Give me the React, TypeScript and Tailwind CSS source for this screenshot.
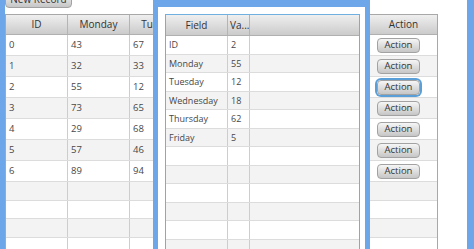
import React from 'react';

const FONT = "font-['Open_Sans','Liberation_Sans',sans-serif]";

// back table columns (px, includes right border line)
const BACK_COLS = [
  { key: 'id', label: 'ID', w: 'w-[62px]' },
  { key: 'mon', label: 'Monday', w: 'w-[62px]' },
  { key: 'tue', label: 'Tuesday', w: 'w-[62px]' },
  { key: 'wed', label: 'Wednesday', w: 'w-[62px]' },
  { key: 'thu', label: 'Thursday', w: 'w-[62px]' },
  { key: 'fri', label: 'Friday', w: 'w-[54px]' },
];

const RECORDS = [
  [0, 43, 67, 21, 35, 12],
  [1, 32, 33, 48, 77, 20],
  [2, 55, 12, 18, 62, 5],
  [3, 73, 65, 40, 19, 88],
  [4, 29, 68, 11, 53, 70],
  [5, 57, 46, 92, 8, 31],
  [6, 89, 94, 27, 60, 44],
];

const DETAIL = [
  ['ID', '2'],
  ['Monday', '55'],
  ['Tuesday', '12'],
  ['Wednesday', '18'],
  ['Thursday', '62'],
  ['Friday', '5'],
];

const headerCls =
  'flex items-center justify-center overflow-hidden whitespace-nowrap border-r border-[#b4b4b4] bg-linear-to-b from-[#efefef] to-[#cbcbcb] text-[10px] text-[#333] h-full';

const cellCls = 'flex items-center overflow-hidden whitespace-nowrap border-r border-[#cdcdcd] pl-[3px]';

const ActionButton: React.FC<{ focused?: boolean }> = ({ focused }) => (
  <div
    className={
      'flex h-[15px] w-[43px] items-center justify-center rounded-[4px] border border-[#a2a2a2] bg-linear-to-b from-[#f6f6f6] to-[#c6c6c6] text-[9.5px] text-[#333] ' +
      (focused ? 'ring-2 ring-[#5b9fd8]' : '')
    }
  >
    Action
  </div>
);

export default function App() {
  const emptyBack = Array.from({ length: 5 });
  const emptyDetail = Array.from({ length: 8 });

  return (
    <div className={`relative flex h-[249px] w-[474px] overflow-hidden bg-[#6ea6ea] ${FONT}`}>
      {/* main window */}
      <div className="ml-[5px] mr-[7px] flex flex-1 flex-col bg-white">
        <div className="-mt-[9px] flex h-[17px] w-[67px] items-center justify-center rounded-[4px] border border-[#a2a2a2] bg-linear-to-b from-[#f6f6f6] to-[#c6c6c6] text-[10px] text-[#333]">
          New Record
        </div>

        <div className="mt-[6px] flex w-[433px] flex-col border-l border-r border-t border-[#a8a8a8]">
          {/* header */}
          <div className="flex h-[20px] border-b border-[#b0b0b0]">
            {BACK_COLS.map((c) => (
              <div key={c.key} className={`${headerCls} ${c.w}`}>
                {c.label}
              </div>
            ))}
            <div className={`${headerCls} w-[67px] border-r-0`}>Action</div>
          </div>

          {/* data rows */}
          {RECORDS.map((r, i) => (
            <div
              key={i}
              className={`flex h-[21px] border-b border-[#dcdcdc] text-[9.5px] text-[#474747] ${
                i % 2 ? 'bg-[#f3f3f3]' : 'bg-white'
              }`}
            >
              {BACK_COLS.map((c, j) => (
                <div key={c.key} className={`${cellCls} ${c.w}`}>
                  {r[j]}
                </div>
              ))}
              <div className="flex w-[67px] items-center pl-[7px]">
                <ActionButton focused={i === 2} />
              </div>
            </div>
          ))}

          {/* empty rows */}
          {emptyBack.map((_, i) => (
            <div
              key={i}
              className={`flex h-[18.5px] border-b border-[#dcdcdc] ${(i + 7) % 2 ? 'bg-[#f3f3f3]' : 'bg-white'}`}
            >
              {BACK_COLS.map((c) => (
                <div key={c.key} className={`border-r border-[#cdcdcd] ${c.w}`} />
              ))}
              <div className="w-[67px]" />
            </div>
          ))}
        </div>
      </div>

      {/* dialog window over the main window */}
      <div className="absolute left-[153px] top-0 flex h-[260px] w-[217px] bg-[#6ea6ea] px-[5px] pt-[7px]">
        <div className="flex-1 bg-white pl-[7px] pr-[5px] pt-[7px]">
          <div className="flex flex-col border border-[#6fb0e0]">
            <div className="flex h-[21px] border-b border-[#b0b0b0]">
              <div className={`${headerCls} w-[62px]`}>Field</div>
              <div className={`${headerCls} w-[22px] justify-start pl-[2px] text-[9.5px]`}>Va...</div>
              <div className={`${headerCls} flex-1 border-r-0`} />
            </div>
            {DETAIL.map(([f, v], i) => (
              <div
                key={f}
                className={`flex h-[18.5px] border-b border-[#dcdcdc] text-[9px] text-[#474747] ${
                  i % 2 ? 'bg-[#f3f3f3]' : 'bg-white'
                }`}
              >
                <div className={`${cellCls} w-[62px]`}>{f}</div>
                <div className={`${cellCls} w-[22px]`}>{v}</div>
                <div className="flex-1" />
              </div>
            ))}
            {emptyDetail.map((_, i) => (
              <div
                key={i}
                className={`flex h-[18.5px] border-b border-[#dcdcdc] ${(i + 6) % 2 ? 'bg-[#f3f3f3]' : 'bg-white'}`}
              >
                <div className="w-[62px] border-r border-[#cdcdcd]" />
                <div className="w-[22px] border-r border-[#cdcdcd]" />
                <div className="flex-1" />
              </div>
            ))}
          </div>
        </div>
      </div>
    </div>
  );
}
